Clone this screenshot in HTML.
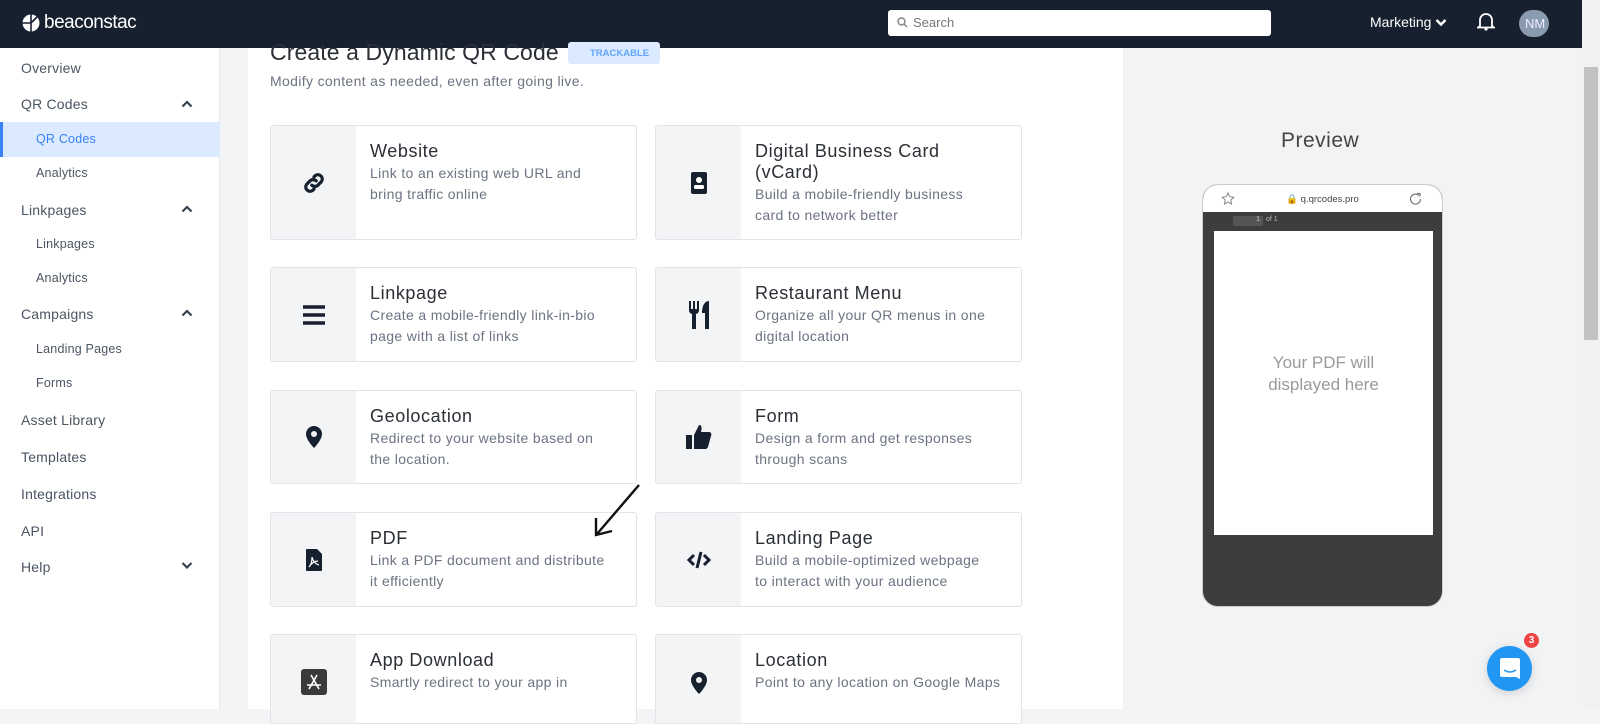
<!DOCTYPE html>
<html><head><meta charset="utf-8"><style>
*{box-sizing:border-box;margin:0;padding:0}
body{width:1600px;height:709px;overflow:hidden;font-family:"Liberation Sans",sans-serif;background:#f3f4f6;position:relative}
.hdr{position:absolute;left:0;top:0;width:1582px;height:48px;background:#17202f}
.logo{position:absolute;left:22px;top:12px;color:#fff;font-size:19px;letter-spacing:-0.5px;display:flex;align-items:center;gap:4px}
.search{position:absolute;left:888px;top:10px;width:383px;height:26px;background:#fff;border-radius:3px;font-size:13px;color:#777;padding:5px 0 0 25px}
.mk{position:absolute;left:1370px;top:14px;color:#fff;font-size:14px}
.av{position:absolute;left:1519px;top:10px;width:30px;height:27px;border-radius:14px;background:#8a9bb0;color:#eef;font-size:13px;padding:6px 0 0 6px}
.side{position:absolute;left:0;top:48px;width:220px;height:661px;background:#fff;border-right:1px solid #e5e7eb}
.si{position:absolute;left:21px;font-size:14px;color:#4b5563;letter-spacing:0.2px}
.ss{position:absolute;left:36px;font-size:12.5px;color:#4b5563;letter-spacing:0.2px}
.chev{position:absolute;left:181px;width:12px;height:8px}
.act{position:absolute;left:0;top:74px;width:220px;height:35px;background:#dbeafe;border-left:3px solid #3b82f6}
.main{position:absolute;left:248px;top:48px;width:875px;height:661px;background:#fff}
.prev{position:absolute;left:1123px;top:48px;width:459px;height:661px;background:#f2f3f5}
.sb{position:absolute;left:1582px;top:0;width:18px;height:709px;background:#f1f1f1}
.card{position:absolute;width:367px;border:1px solid #e2e4e8;border-radius:3px;background:#fff;overflow:hidden}
.ic{position:absolute;left:0;top:0;bottom:0;width:85px;background:#f3f4f6;display:flex;align-items:center;justify-content:center}
.t{position:absolute;left:99px;top:15px;font-size:18px;color:#2b2f36;line-height:21px;letter-spacing:0.6px}
.d{position:absolute;left:99px;font-size:14px;color:#6b7382;line-height:21px;width:232px;letter-spacing:0.35px}
</style></head><body>
<div class="hdr">
<div class="logo"><svg width="18" height="18" viewBox="0 0 18 18"><circle cx="9" cy="9" r="8.5" fill="#fff"/><path d="M9 0.5V9M0.5 9H9M9 9L15 3M9 9V17.5" stroke="#17202f" stroke-width="1.6"/></svg>beaconstac</div>
<div class="search"><svg style="position:absolute;left:9px;top:7px" width="11" height="11" viewBox="0 0 11 11"><circle cx="4.5" cy="4.5" r="3.5" stroke="#888" stroke-width="1.5" fill="none"/><path d="M7 7l3 3" stroke="#888" stroke-width="1.5"/></svg>Search</div>
<div class="mk">Marketing <svg width="12" height="9" viewBox="0 0 12 9"><path d="M1.5 2l4.5 4.5L10.5 2" stroke="#fff" stroke-width="2.5" fill="none"/></svg></div>
<svg style="position:absolute;left:1477px;top:11px" width="18" height="20" viewBox="0 0 18 20"><path d="M3 15V9a6 6 0 0112 0v6l2 1.5H1z" stroke="#fff" stroke-width="1.8" fill="none"/><circle cx="9" cy="18" r="1.6" fill="#fff"/></svg>
<div class="av">NM</div>
</div>
<div class="side">
<div class="si" style="top:12px">Overview</div>
<div class="si" style="top:48px">QR Codes</div>
<svg class="chev" style="top:52px" viewBox="0 0 12 8"><path d="M1.5 6.5L6 2l4.5 4.5" stroke="#374151" stroke-width="2.2" fill="none"/></svg>
<div class="act"></div>
<div class="ss" style="top:84px;color:#3b82f6">QR Codes</div>
<div class="ss" style="top:118px">Analytics</div>
<div class="si" style="top:154px">Linkpages</div>
<svg class="chev" style="top:157px" viewBox="0 0 12 8"><path d="M1.5 6.5L6 2l4.5 4.5" stroke="#374151" stroke-width="2.2" fill="none"/></svg>
<div class="ss" style="top:189px">Linkpages</div>
<div class="ss" style="top:223px">Analytics</div>
<div class="si" style="top:258px">Campaigns</div>
<svg class="chev" style="top:261px" viewBox="0 0 12 8"><path d="M1.5 6.5L6 2l4.5 4.5" stroke="#374151" stroke-width="2.2" fill="none"/></svg>
<div class="ss" style="top:294px">Landing Pages</div>
<div class="ss" style="top:328px">Forms</div>
<div class="si" style="top:364px">Asset Library</div>
<div class="si" style="top:401px">Templates</div>
<div class="si" style="top:438px">Integrations</div>
<div class="si" style="top:475px">API</div>
<div class="si" style="top:511px">Help</div>
<svg class="chev" style="top:513px" viewBox="0 0 12 8"><path d="M1.5 2L6 6.5 10.5 2" stroke="#374151" stroke-width="2.2" fill="none"/></svg>
</div>
<div class="main">
<div style="position:absolute;left:22px;top:-9px;font-size:23px;color:#2b2f36;letter-spacing:0.1px">Create a Dynamic QR Code</div>
<div style="position:absolute;left:320px;top:-6px;width:92px;height:22px;background:#dbeafe;border-radius:3px;color:#60a5fa;font-size:9.5px;font-weight:bold;padding:6px 0 0 22px">TRACKABLE</div>
<div style="position:absolute;left:22px;top:25px;font-size:14px;color:#6b7382;letter-spacing:0.35px">Modify content as needed, even after going live.</div>
</div>
<div class="prev">
<div style="position:absolute;left:158px;top:81px;font-size:21px;color:#444;letter-spacing:0.5px">Preview</div>
<div style="position:absolute;left:79px;top:136px;width:241px;height:423px;border-radius:16px;background:#3d3d3d;border:1px solid #ccc;overflow:hidden">
<div style="height:27px;background:#fff;font-size:9.5px;color:#444;text-align:center;padding-top:9px">🔒 q.qrcodes.pro</div>
<svg style="position:absolute;left:18px;top:7px" width="14" height="14" viewBox="0 0 14 14"><path d="M7 1l1.8 3.8 4 .5-3 2.8.8 4L7 10l-3.6 2 .8-4-3-2.8 4-.5z" stroke="#888" fill="none"/></svg>
<svg style="position:absolute;left:206px;top:7px" width="13" height="13" viewBox="0 0 13 13"><path d="M10 3.5A5 5 0 1 0 11.5 7" stroke="#777" stroke-width="1.2" fill="none"/><path d="M8 1.5h3v3" stroke="#777" fill="none" stroke-width="1.2"/></svg>
<div style="position:absolute;left:30px;top:31px;width:30px;height:10px;background:#555;font-size:7px;color:#ccc;text-align:right;padding-right:3px">1</div>
<div style="position:absolute;left:63px;top:31px;font-size:7px;color:#bbb">of 1</div>
<div style="position:absolute;left:11px;top:46px;width:219px;height:304px;background:#fff;color:#9a9a9a;font-size:17px;text-align:center;padding-top:121px;line-height:22px">Your PDF will<br>displayed here</div>
</div>
</div>
<div class="sb"><div style="position:absolute;left:2px;top:67px;width:14px;height:273px;background:#c1c1c1"></div></div>

<div class="card" style="left:270px;top:125px;height:115px"><div class="ic"><svg width="26" height="26" viewBox="0 0 24 24"><path d="M10 14a4 4 0 005.6 0l3.2-3.2a4 4 0 00-5.6-5.6l-1.2 1.2M14 10a4 4 0 00-5.6 0l-3.2 3.2a4 4 0 005.6 5.6l1.2-1.2" stroke="#17202f" stroke-width="3" fill="none" stroke-linecap="round"/></svg></div><div class="t">Website</div><div class="d" style="top:37px">Link to an existing web URL and bring traffic online</div></div>
<div class="card" style="left:655px;top:125px;height:115px"><div class="ic"><svg width="18" height="24" viewBox="0 0 18 24"><rect x="1" y="1" width="16" height="22" rx="2" fill="#17202f"/><circle cx="9" cy="9" r="3" fill="#fff"/><rect x="4" y="14" width="10" height="4" rx="1.5" fill="#fff"/></svg></div><div class="t" style="width:230px">Digital Business Card (vCard)</div><div class="d" style="top:58px">Build a mobile-friendly business card to network better</div></div>
<div class="card" style="left:270px;top:267px;height:95px"><div class="ic"><svg width="24" height="22" viewBox="0 0 24 22"><path d="M1 3h22M1 11h22M1 19h22" stroke="#17202f" stroke-width="3.5"/></svg></div><div class="t">Linkpage</div><div class="d" style="top:37px">Create a mobile-friendly link-in-bio page with a list of links</div></div>
<div class="card" style="left:655px;top:267px;height:95px"><div class="ic"><svg width="24" height="30" viewBox="0 0 24 30"><path d="M2 1v9a4 4 0 003 4v15h4V14a4 4 0 003-4V1h-2v8H8V1H6v8H4V1z" fill="#17202f"/><path d="M22 1c-5 0-7 6-7 12h3v16h4z" fill="#17202f"/></svg></div><div class="t">Restaurant Menu</div><div class="d" style="top:37px">Organize all your QR menus in one digital location</div></div>
<div class="card" style="left:270px;top:390px;height:94px"><div class="ic"><svg width="18" height="24" viewBox="0 0 18 24"><path d="M9 1a8 8 0 00-8 8c0 6 8 14 8 14s8-8 8-14a8 8 0 00-8-8z" fill="#17202f"/><circle cx="9" cy="9" r="3" fill="#f3f4f6"/></svg></div><div class="t">Geolocation</div><div class="d" style="top:37px">Redirect to your website based on the location.</div></div>
<div class="card" style="left:655px;top:390px;height:94px"><div class="ic"><svg width="28" height="28" viewBox="0 0 28 28"><rect x="1" y="12" width="6" height="14" fill="#17202f"/><path d="M9 12l5-10c3 0 3 3 2 7h8c2 0 3 2 2 4l-3 11c-1 2-2 2-3 2H9z" fill="#17202f"/></svg></div><div class="t">Form</div><div class="d" style="top:37px">Design a form and get responses through scans</div></div>
<div class="card" style="left:270px;top:512px;height:95px"><div class="ic"><svg width="18" height="24" viewBox="0 0 18 24"><path d="M1 2a1 1 0 011-1h10l5 5v16a1 1 0 01-1 1H2a1 1 0 01-1-1z" fill="#17202f"/><path d="M7 9c1 4 3 7 7 8M4 19c2-3 5-6 9-6M7 9c0 4-1 8-3 10" stroke="#fff" stroke-width="1.2" fill="none"/></svg></div><div class="t">PDF</div><div class="d" style="top:37px;width:245px">Link a PDF document and distribute it efficiently</div></div>
<div class="card" style="left:655px;top:512px;height:95px"><div class="ic"><svg width="24" height="20" viewBox="0 0 24 20"><path d="M7 5l-5 5 5 5M17 5l5 5-5 5M14 2l-4 16" stroke="#17202f" stroke-width="3" fill="none"/></svg></div><div class="t">Landing Page</div><div class="d" style="top:37px">Build a mobile-optimized webpage to interact with your audience</div></div>
<div class="card" style="left:270px;top:634px;height:90px"><div class="ic" style="align-items:flex-start;padding-top:34px"><svg width="26" height="26" viewBox="0 0 26 26"><rect x="0" y="0" width="26" height="26" rx="3" fill="#3a3a3a"/><path d="M8 20l8-14M18 20L10 6M6 16h14" stroke="#fff" stroke-width="1.6"/></svg></div><div class="t">App Download</div><div class="d" style="top:37px">Smartly redirect to your app in</div></div>
<div class="card" style="left:655px;top:634px;height:90px"><div class="ic" style="align-items:flex-start;padding-top:36px"><svg width="18" height="24" viewBox="0 0 18 24"><path d="M9 1a8 8 0 00-8 8c0 6 8 14 8 14s8-8 8-14a8 8 0 00-8-8z" fill="#17202f"/><circle cx="9" cy="9" r="3" fill="#f3f4f6"/></svg></div><div class="t">Location</div><div class="d" style="top:37px;width:260px">Point to any location on Google Maps</div></div>

<svg style="position:absolute;left:590px;top:482px" width="52" height="56" viewBox="0 0 52 56"><path d="M49 3L7 52M6 36l0 17 16-4" stroke="#111" stroke-width="2.4" fill="none"/></svg>
<div style="position:absolute;left:1487px;top:646px;width:45px;height:45px;border-radius:50%;background:#2196f3;box-shadow:0 2px 10px rgba(0,0,0,.15)"><svg style="position:absolute;left:13px;top:12px" width="20" height="22" viewBox="0 0 20 22"><path d="M2 0h16a2 2 0 012 2v19l-4-2H2a2 2 0 01-2-2V2a2 2 0 012-2z" fill="#fff"/><path d="M4 12q6 4 12 0" stroke="#2196f3" stroke-width="1.5" fill="none"/></svg></div>
<div style="position:absolute;left:1524px;top:633px;width:15px;height:15px;border-radius:50%;background:#ef4444;color:#fff;font-size:10px;font-weight:bold;text-align:center;line-height:15px">3</div>
</body></html>
